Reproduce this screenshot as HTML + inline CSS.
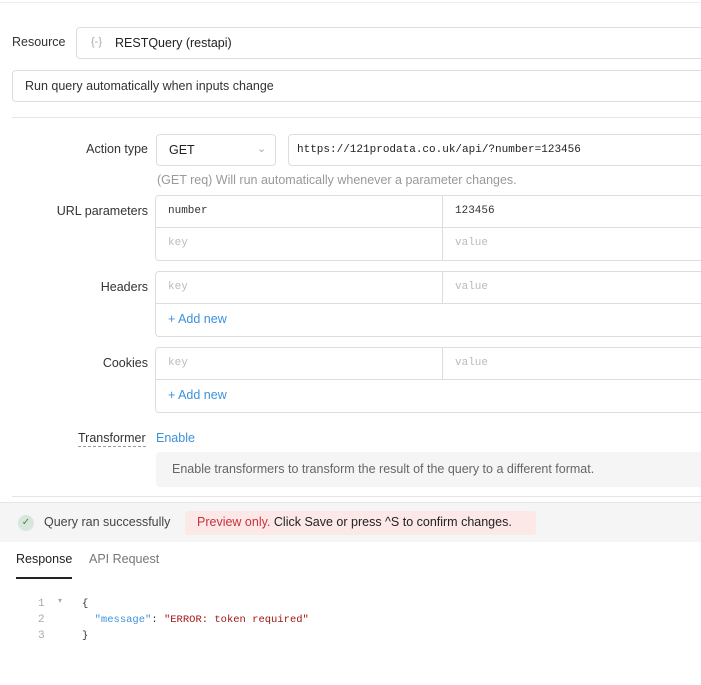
<!DOCTYPE html>
<html><head><style>
*{box-sizing:border-box;margin:0;padding:0}
body{width:701px;height:685px;overflow:hidden;background:#fff;font-family:"Liberation Sans",sans-serif;font-size:12.5px;color:#333;position:relative}
.a{position:absolute}
.box{position:absolute;border:1px solid #ddd;border-radius:4px;background:#fff}
.lbl{position:absolute;text-align:right;width:148px;left:0;color:#333}
.mono{font-family:"Liberation Mono",monospace;font-size:11px}
.ph{color:#bbb}
.tbl{position:absolute;left:155px;width:560px;border:1px solid #ddd;border-radius:4px}
.row{height:32px;border-bottom:1px solid #ddd;position:relative}
.row:last-child{border-bottom:none}
.row .c1{position:absolute;left:12px;top:9px}
.row .c2{position:absolute;left:299px;top:9px}
.row .sp{position:absolute;left:286px;top:0;bottom:0;border-left:1px solid #ddd}
.blue{color:#3c92dc}
</style></head><body>
<div class="a" style="left:0;top:2px;width:701px;border-top:1px solid #eee"></div>
<div class="a" style="left:12px;top:35px">Resource</div>
<div class="box" style="left:76px;top:27px;width:640px;height:32px">
<span class="a" style="left:14px;top:8px;color:#aaa;font-size:11px">{-}</span>
<span class="a" style="left:38px;top:8px;color:#222">RESTQuery (restapi)</span></div>
<div class="box" style="left:12px;top:70px;width:700px;height:32px"><span class="a" style="left:12px;top:8px">Run query automatically when inputs change</span></div>
<div class="a" style="left:12px;top:117px;width:689px;border-top:1px solid #e5e5e5"></div>
<div class="lbl" style="top:142px">Action type</div>
<div class="box" style="left:156px;top:134px;width:120px;height:32px"><span class="a" style="left:12px;top:8px;color:#222">GET</span><span class="a" style="left:100px;top:7px;color:#aaa;font-size:11px">⌄</span></div>
<div class="box" style="left:288px;top:134px;width:430px;height:32px"><span class="a mono" style="left:8px;top:9px;color:#222">https://121prodata.co.uk/api/?number=123456</span></div>
<div class="a" style="left:157px;top:173px;color:#999">(GET req) Will run automatically whenever a parameter changes.</div>
<div class="lbl" style="top:204px">URL parameters</div>
<div class="tbl" style="top:195px"><div class="row"><span class="c1 mono">number</span><span class="sp"></span><span class="c2 mono">123456</span></div><div class="row"><span class="c1 mono ph">key</span><span class="sp"></span><span class="c2 mono ph">value</span></div></div>
<div class="lbl" style="top:280px">Headers</div>
<div class="tbl" style="top:271px"><div class="row"><span class="c1 mono ph">key</span><span class="sp"></span><span class="c2 mono ph">value</span></div><div class="row"><span class="c1 blue" style="top:8px">+ Add new</span></div></div>
<div class="lbl" style="top:356px">Cookies</div>
<div class="tbl" style="top:347px"><div class="row"><span class="c1 mono ph">key</span><span class="sp"></span><span class="c2 mono ph">value</span></div><div class="row"><span class="c1 blue" style="top:8px">+ Add new</span></div></div>
<div class="a" style="left:78px;top:431px;border-bottom:1px dashed #999;padding-bottom:1px">Transformer</div>
<div class="a blue" style="left:156px;top:431px">Enable</div>
<div class="a" style="left:156px;top:452px;width:560px;height:35px;background:#f5f5f5;border-radius:4px"><span class="a" style="left:16px;top:10px;color:#666">Enable transformers to transform the result of the query to a different format.</span></div>
<div class="a" style="left:12px;top:496px;width:689px;border-top:1px solid #e5e5e5"></div>
<div class="a" style="left:0;top:502px;width:701px;height:40px;background:#f5f5f5;border-top:1px solid #e5e5e5">
<div class="a" style="left:18px;top:12px;width:16px;height:16px;border-radius:50%;background:#d8e6dc;color:#3a8a52;font-size:10px;text-align:center;line-height:16px">✓</div>
<span class="a" style="left:44px;top:12px;color:#444">Query ran successfully</span>
<div class="a" style="left:185px;top:8px;width:351px;height:24px;background:#fde8e8;border-radius:3px"><span class="a" style="left:12px;top:4px;color:#222;white-space:nowrap"><span style="color:#c8323c">Preview only.</span> Click Save or press ^S to confirm changes.</span></div></div>
<div class="a" style="left:16px;top:552px;color:#222">Response</div>
<div class="a" style="left:89px;top:552px;color:#777">API Request</div>
<div class="a" style="left:16px;top:577px;width:56px;height:2px;background:#222"></div>
<div class="a mono" style="left:38px;top:596px;color:#aaa;line-height:16px;font-size:11px">1<br>2<br>3</div>
<div class="a" style="left:58px;top:596px;color:#aaa;font-size:8px">▾</div>
<div class="a mono" style="left:82px;top:596px;line-height:16px;font-size:10.5px;color:#333;white-space:pre">{
  <span style="color:#3c92dc">"message"</span>: <span style="color:#a31515">"ERROR: token required"</span>
}</div>
</body></html>
